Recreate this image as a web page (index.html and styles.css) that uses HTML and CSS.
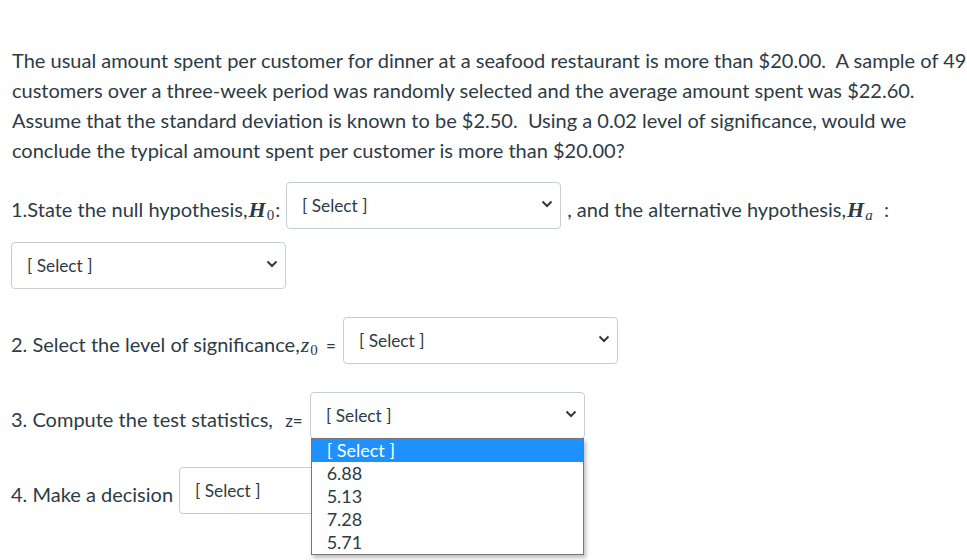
FILE: index.html
```html
<!DOCTYPE html>
<html>
<head>
<meta charset="utf-8">
<link rel="stylesheet" href="styles.css">
</head>
<body>
<div class="page">
  <p class="question">The usual amount spent per customer for dinner at a seafood restaurant is more than $20.00.&nbsp; A sample of 49<br>customers over a three-week period was randomly selected and the average amount spent was $22.60.<br>Assume that the standard deviation is known to be $2.50.&nbsp; Using a 0.02 level of significance, would we<br>conclude the typical amount spent per customer is more than $20.00?</p>

  <div class="row row1">
    <span class="label">1.State the null hypothesis,<span class="math"><i class="mh">H</i><sub>0</sub></span>:</span>
    <div class="select"><span class="sel-text">[ Select ]</span><svg class="chev" viewBox="0 0 12 8" width="12" height="8"><path d="M1.5 1.5 L6 6 L10.5 1.5" fill="none" stroke="#2d3b45" stroke-width="2"/></svg></div>
    <span class="label after">, and the alternative hypothesis,<span class="math"><i class="mh">H</i><sub><i>a</i></sub></span>&nbsp;&nbsp;:</span>
  </div>
  <div class="row row1b">
    <div class="select"><span class="sel-text">[ Select ]</span><svg class="chev" viewBox="0 0 12 8" width="12" height="8"><path d="M1.5 1.5 L6 6 L10.5 1.5" fill="none" stroke="#2d3b45" stroke-width="2"/></svg></div>
  </div>

  <div class="row">
    <span class="label">2. Select the level of significance,<span class="math"><i class="mz">z</i><sub>0</sub></span> <span class="eq">=</span></span>
    <div class="select"><span class="sel-text">[ Select ]</span><svg class="chev" viewBox="0 0 12 8" width="12" height="8"><path d="M1.5 1.5 L6 6 L10.5 1.5" fill="none" stroke="#2d3b45" stroke-width="2"/></svg></div>
  </div>

  <div class="row">
    <span class="label">3. Compute the test statistics,&nbsp; <span class="eq">z=</span></span>
    <div class="select open"><span class="sel-text">[ Select ]</span><svg class="chev" viewBox="0 0 12 8" width="12" height="8"><path d="M1.5 1.5 L6 6 L10.5 1.5" fill="none" stroke="#2d3b45" stroke-width="2"/></svg>
      <ul class="menu">
        <li class="active">[ Select ]</li>
        <li>6.88</li>
        <li>5.13</li>
        <li>7.28</li>
        <li>5.71</li>
      </ul>
    </div>
  </div>

  <div class="row">
    <span class="label">4. Make a decision</span>
    <div class="select"><span class="sel-text">[ Select ]</span><svg class="chev" viewBox="0 0 12 8" width="12" height="8"><path d="M1.5 1.5 L6 6 L10.5 1.5" fill="none" stroke="#2d3b45" stroke-width="2"/></svg></div>
  </div>
</div>
</body>
</html>
```
FILE: styles.css
```css
html, body {
  margin: 0;
  padding: 0;
  background: #ffffff;
}
.page {
  min-height: 560px;
  box-sizing: border-box;
  padding: 45px 0 0 11px;
  font-family: Lato, "Open Sans", sans-serif;
  font-size: 20px;
  color: #2d3b45;
}
.question {
  margin: 0;
  padding-left: 1px;
  line-height: 30px;
  white-space: nowrap;
}
.row {
  display: flex;
  align-items: flex-start;
  height: 47px;
  margin-top: 28px;
  white-space: nowrap;
}
.row1 {
  margin-top: 17px;
}
.row1b {
  margin-top: 13px;
}
.label {
  line-height: 30px;
  padding-top: 12px;
  margin-right: 6px;
}
.label.after {
  margin-left: 6px;
  margin-right: 0;
}
.math {
  font-family: "Liberation Serif", "DejaVu Serif", serif;
  font-size: 22px;
  margin-left: 1px;
  margin-right: 1px;
}
.mh {
  font-weight: bold;
  font-style: italic;
}
.mz {
  font-style: italic;
}
.math sub {
  font-size: 15px;
  vertical-align: -3px;
  font-style: normal;
  margin-left: 1px;
}
.math sub i {
  font-style: italic;
}
.eq {
  font-size: 17px;
  margin-left: 2px;
  margin-right: 1px;
}
.select {
  position: relative;
  box-sizing: border-box;
  width: 275px;
  height: 47px;
  border: 1px solid #c7cdd1;
  border-radius: 4px;
  background: #fff;
  padding: 7px 0 0 15px;
  line-height: 30px;
  font-size: 18px;
}
.sel-text {
  display: inline-block;
  transform: scaleX(0.96);
  transform-origin: left center;
}
.chev {
  position: absolute;
  right: 7px;
  top: 17px;
}
.menu {
  position: absolute;
  z-index: 5;
  left: 0;
  top: 45px;
  width: 273px;
  box-sizing: border-box;
  margin: 0;
  padding: 0;
  list-style: none;
  background: #fff;
  border: 1px solid #767676;
  box-shadow: 2px 3px 4px rgba(0,0,0,0.25);
}
.menu li {
  height: 23px;
  line-height: 22px;
  padding-left: 15px;
  font-size: 18px;
  color: #2d3b45;
}
.menu li.active {
  background: #1e90ff;
  color: #fff;
}
```
